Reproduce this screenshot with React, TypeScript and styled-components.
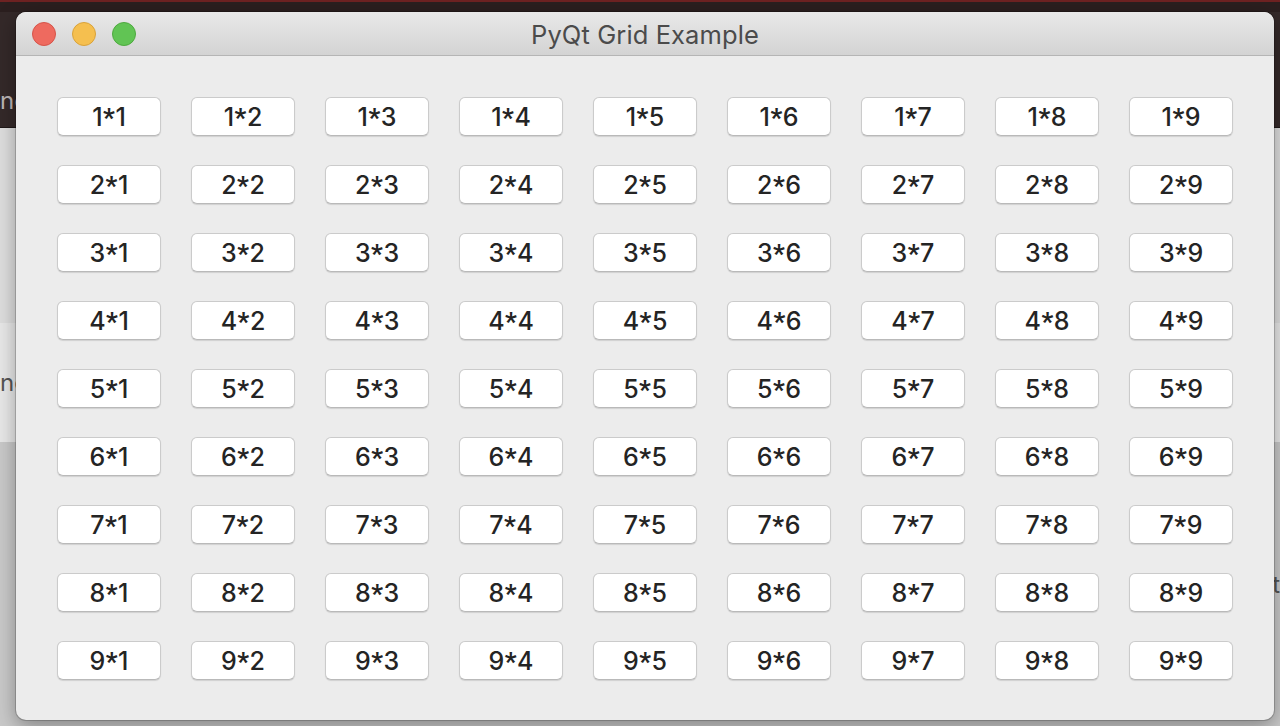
import React from 'react';
import styled, { createGlobalStyle } from 'styled-components';

const GlobalStyle = createGlobalStyle`
  html, body {
    margin: 0;
    padding: 0;
    width: 1280px;
    height: 726px;
    overflow: hidden;
    font-family: Inter, "Noto Sans", "Liberation Sans", sans-serif;
  }
`;

const Desktop = styled.div`
  position: relative;
  width: 1280px;
  height: 726px;
  display: flex;
  flex-direction: column;
  background: #d6d6d6;
`;

const MenuStrip = styled.div`
  height: 10px;
  background: #2b1f1f;
  border-top: 2px solid #6e2222;
`;

const DarkBand = styled.div`
  height: 116px;
  background: #342929;
  border-bottom: 1px solid #1f1818;
  display: flex;
  align-items: center;
  color: #bdb6b6;
  font-size: 24px;
  padding-top: 62px;
  box-sizing: border-box;
`;

const LightBand = styled.div<{ $h: number; $bg: string }>`
  height: ${(p) => p.$h}px;
  background: ${(p) => p.$bg};
  display: flex;
  align-items: center;
  justify-content: space-between;
  color: #555;
  font-size: 24px;
`;

const BgText = styled.span`
  margin: 0;
`;

const Window = styled.div`
  position: absolute;
  left: 16px;
  top: 12px;
  width: 1258px;
  height: 708px;
  border-radius: 10px;
  overflow: hidden;
  background: #ececec;
  box-shadow: 0 0 0 1px rgba(0, 0, 0, 0.18), 0 6px 20px rgba(0, 0, 0, 0.35);
  display: flex;
  flex-direction: column;
`;

const TitleBar = styled.div`
  position: relative;
  height: 43px;
  flex-shrink: 0;
  background: linear-gradient(#e9e9e9, #d3d3d3);
  border-bottom: 1px solid #b5b5b5;
  display: flex;
  align-items: center;
  justify-content: center;
`;

const Lights = styled.div`
  position: absolute;
  left: 16px;
  top: 10px;
  display: flex;
  gap: 16px;
`;

const Light = styled.span<{ $fill: string; $edge: string }>`
  width: 24px;
  height: 24px;
  border-radius: 50%;
  box-sizing: border-box;
  background: ${(p) => p.$fill};
  border: 1px solid ${(p) => p.$edge};
`;

const Title = styled.div`
  font-size: 25.5px;
  color: #4b4b4b;
  padding-top: 2px;
  letter-spacing: 0.1px;
`;

const Grid = styled.div`
  flex: 1;
  padding: 41px 41px 40px;
  display: grid;
  grid-template-columns: repeat(9, 104px);
  grid-auto-rows: 39px;
  column-gap: 30px;
  row-gap: 29px;
  align-content: start;
`;

const CellButton = styled.button`
  margin: 0;
  padding: 2px 0 0;
  box-sizing: border-box;
  background: #ffffff;
  border: 1px solid #cbcbcb;
  border-bottom-color: #b9b9b9;
  border-radius: 6px;
  box-shadow: 0 1px 1px rgba(0, 0, 0, 0.12);
  font-family: Inter, "Noto Sans", "Liberation Sans", sans-serif;
  font-size: 25px;
  font-weight: 500;
  color: #242424;
  display: flex;
  align-items: center;
  justify-content: center;
  line-height: 1;
`;

const Star = styled.span`
  font-family: Roboto, "Liberation Sans", sans-serif;
  font-weight: 700;
  font-size: 26px;
  margin: 0 0.5px;
`;

const rows = Array.from({ length: 9 }, (_, i) => i + 1);

export default function App() {
  return (
    <>
      <GlobalStyle />
      <Desktop>
        <MenuStrip />
        <DarkBand>
          <BgText>no</BgText>
        </DarkBand>
        <LightBand $h={195} $bg="#dedede" />
        <LightBand $h={120} $bg="#e8e8e8">
          <BgText>ne</BgText>
        </LightBand>
        <LightBand $h={284} $bg="#c9c9c9">
          <span />
          <BgText>t</BgText>
        </LightBand>
        <Window>
          <TitleBar>
            <Lights>
              <Light $fill="#ee6a5f" $edge="#d5544a" />
              <Light $fill="#f5bf4f" $edge="#d8a23b" />
              <Light $fill="#61c454" $edge="#4ea93f" />
            </Lights>
            <Title>PyQt Grid Example</Title>
          </TitleBar>
          <Grid>
            {rows.map((r) =>
              rows.map((c) => (
                <CellButton key={`${r}-${c}`}>
                  {r}
                  <Star>*</Star>
                  {c}
                </CellButton>
              ))
            )}
          </Grid>
        </Window>
      </Desktop>
    </>
  );
}
